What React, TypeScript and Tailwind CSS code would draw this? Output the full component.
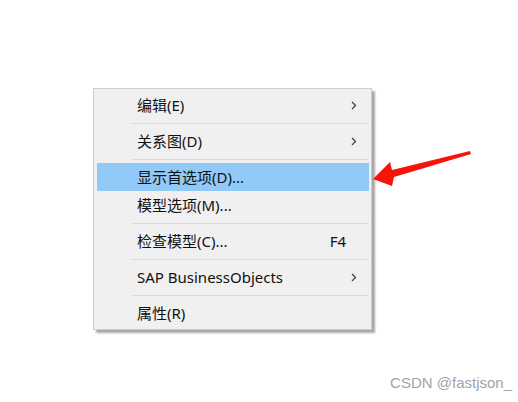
type Item =
  | { kind: "item"; label: string; right?: "sub" | string; active?: boolean }
  | { kind: "sep" };

const items: Item[] = [
  { kind: "item", label: "编辑(E)", right: "sub" },
  { kind: "sep" },
  { kind: "item", label: "关系图(D)", right: "sub" },
  { kind: "sep" },
  { kind: "item", label: "显示首选项(D)...", active: true },
  { kind: "item", label: "模型选项(M)..." },
  { kind: "sep" },
  { kind: "item", label: "检查模型(C)...", right: "F4" },
  { kind: "sep" },
  { kind: "item", label: "SAP BusinessObjects", right: "sub" },
  { kind: "sep" },
  { kind: "item", label: "属性(R)" },
];

function Chevron() {
  return (
    <svg width="6" height="9" viewBox="0 0 6 9" className="mr-[12px]">
      <path d="M1 1 L4.5 4.5 L1 8" fill="none" stroke="#444" strokeWidth="1.3" />
    </svg>
  );
}

export default function App() {
  return (
    <div
      className="relative h-[402px] w-[518px] overflow-hidden bg-white pl-[93px] pt-[88px]"
      style={{ fontFamily: '"Noto Sans", "Noto Sans CJK SC", sans-serif' }}
    >
      {/* context menu */}
      <div className="flex w-[279px] flex-col border border-[#cccccc] bg-[#f0f0f0] py-[2px] pl-[3px] pr-[2px] shadow-[3px_3px_2px_rgba(0,0,0,0.35)]">
        {items.map((it, i) =>
          it.kind === "sep" ? (
            <div key={i} className="flex h-[8px] items-center pl-[35px]">
              <div className="h-px w-full bg-[#d9d9d9]" />
            </div>
          ) : (
            <div
              key={i}
              className={`flex h-[28px] items-center pl-[40px] text-[15px] text-[#111] ${
                it.active ? "bg-[#91c9f7]" : ""
              }`}
            >
              <span className="flex-1 whitespace-nowrap">{it.label}</span>
              {it.right === "sub" && <Chevron />}
              {it.right && it.right !== "sub" && <span className="mr-[23px]">{it.right}</span>}
            </div>
          )
        )}
      </div>

      {/* red annotation arrow */}
      <svg className="absolute left-0 top-0" width="518" height="402" viewBox="0 0 518 402">
        <polygon
          points="373,179 390,162 392,170 470,151 471,154 394,177 392,186"
          fill="#f5140a"
        />
      </svg>

      {/* watermark */}
      <div
        className="absolute bottom-[8px] right-[6px] text-[15px] text-[#a3a3a3]"
        style={{ fontFamily: '"Liberation Sans", Arial, sans-serif' }}
      >
        CSDN @fastjson_
      </div>
    </div>
  );
}
